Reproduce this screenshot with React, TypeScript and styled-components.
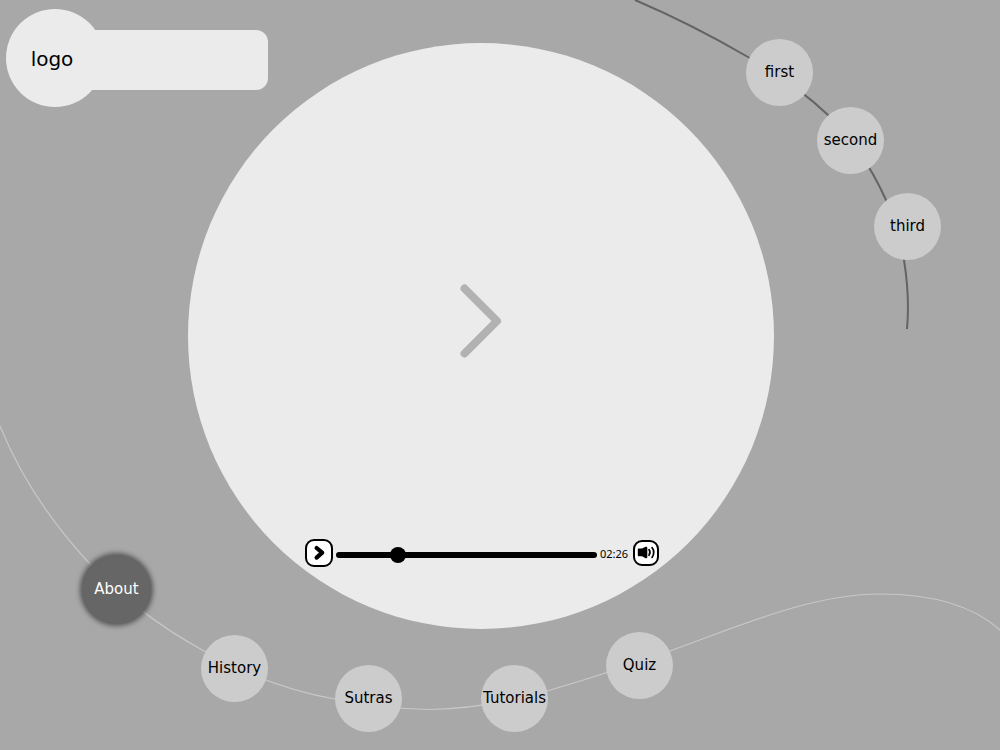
import React, { useState } from "react";
import styled, { createGlobalStyle, css } from "styled-components";

const GlobalStyle = createGlobalStyle`
  *, *::before, *::after { box-sizing: border-box; }
  body {
    margin: 0;
    background: #a8a8a8;
    color: #000;
    font-family: "DejaVu Sans", Verdana, sans-serif;
    font-size: 15px;
  }
`;

const Stage = styled.div`
  position: relative;
  display: grid;
  grid-template-columns: 188fr 586fr 226fr;
  align-items: start;
  width: 100%;
  aspect-ratio: 4 / 3;
  overflow: hidden;
`;

const Curves = styled.svg`
  position: absolute;
  inset: 0;
  width: 100%;
  height: 100%;
  fill: none;
`;

const Header = styled.header`
  position: relative;
  z-index: 1;
  grid-area: 1 / 1 / 2 / 3;
  justify-self: start;
  display: flex;
  align-items: flex-start;
  padding: 9px 0 0 6px;
`;

const LogoLink = styled.a`
  display: flex;
  align-items: center;
  justify-content: center;
  width: 98px;
  height: 98px;
  padding: 2px 6px 0 0;
  border-radius: 50%;
  background: #ebebeb;
  color: inherit;
  font-size: 20px;
  line-height: 24px;
  text-decoration: none;
`;

const LogoBar = styled.div`
  width: 184px;
  height: 60px;
  margin: 21px 0 0 -20px;
  border-radius: 0 12px 12px 0;
  background: #ebebeb;
`;

const Disc = styled.main`
  position: relative;
  grid-area: 1 / 2 / 2 / 3;
  display: flex;
  flex-direction: column;
  aspect-ratio: 1;
  margin-top: 43px;
  padding: 60px 115px 62px 117px;
  border-radius: 50%;
  background: #ebebeb;
`;

const BigPlay = styled.button`
  flex: 1;
  display: flex;
  align-items: center;
  justify-content: center;
  padding: 0 3px 0 0;
  border: 0;
  background: none;
  cursor: pointer;
`;

const Controls = styled.div`
  display: flex;
  align-items: center;
  gap: 3px;
`;

const IconButton = styled.button<{ $size: number }>`
  flex: none;
  display: flex;
  align-items: center;
  justify-content: center;
  width: ${(p) => p.$size}px;
  height: ${(p) => p.$size}px;
  padding: 0;
  border: 2px solid #000;
  border-radius: 9px;
  background: #fff;
  cursor: pointer;
`;

const Timeline = styled.div`
  flex: 1;
  display: flex;
  align-items: center;
  gap: 3px;
  min-width: 0;
  padding-top: 4px;
`;

const Seek = styled.input`
  flex: 1;
  min-width: 0;
  height: 16px;
  margin: 0;
  appearance: none;
  background: none;
  cursor: pointer;

  &::-webkit-slider-runnable-track {
    height: 6px;
    border-radius: 3px;
    background: #000;
  }
  &::-webkit-slider-thumb {
    appearance: none;
    width: 16px;
    height: 16px;
    margin-top: -5px;
    border-radius: 50%;
    background: #000;
  }
`;

const Time = styled.time`
  width: 30px;
  padding-bottom: 2px;
  font-family: "Noto Sans", sans-serif;
  font-size: 11px;
  line-height: 14px;
`;

const NodeLink = styled.a<{ $x: number; $y: number; $active?: boolean }>`
  position: absolute;
  left: ${(p) => p.$x / 10}%;
  top: ${(p) => p.$y / 7.5}%;
  display: flex;
  align-items: center;
  justify-content: center;
  width: 67px;
  height: 67px;
  margin: -33px 0 0 -33px;
  padding-bottom: 1px;
  border-radius: 50%;
  background: #ccc;
  color: #000;
  line-height: 18px;
  text-decoration: none;
  ${(p) =>
    p.$active &&
    css`
      background: #666;
      color: #fff;
      box-shadow: 0 0 0 1px #666, 0 0 5px 3px #555;
    `}
`;

type NodeItem = { label: string; x: number; y: number };

const steps: NodeItem[] = [
  { label: "first", x: 779, y: 72 },
  { label: "second", x: 850, y: 140 },
  { label: "third", x: 907, y: 226 },
];

const sections: NodeItem[] = [
  { label: "About", x: 116, y: 589 },
  { label: "History", x: 234, y: 668 },
  { label: "Sutras", x: 368, y: 698 },
  { label: "Tutorials", x: 514, y: 698 },
  { label: "Quiz", x: 639, y: 665 },
];

export default function App() {
  const [position, setPosition] = useState(22);
  const [active, setActive] = useState("About");

  return (
    <>
      <GlobalStyle />
      <Stage>
        <Curves viewBox="0 0 1000 750" preserveAspectRatio="none" aria-hidden="true">
          <path
            d="M635 0C675 17 712 36 748 57C778 74 805 93 828 115C852 138 871 167 886 200C894 219 900 239 904 260C908 285 909 307 907 329"
            stroke="#646464"
            strokeWidth="2"
          />
          <path
            d="M0 426C21 478 50 521 90 564C123 599 162 628 204 651C245 674 289 691 335 699C367 706 399 709 430 709.5C470 709 508 702 547 691C588 679 629 666 670 651C742 625 812 594 880 594C925 594 970 603 1000 630"
            stroke="#c8c8c8"
            strokeWidth="1.2"
          />
        </Curves>

        <Header>
          <LogoLink href="#home">logo</LogoLink>
          <LogoBar />
        </Header>

        <Disc>
          <BigPlay type="button" aria-label="Play video">
            <svg width="42" height="74" viewBox="0 0 42 74" fill="none" aria-hidden="true">
              <path d="M4.5 4.5L37 37L4.5 69.5" stroke="#b2b2b2" strokeWidth="8" strokeLinecap="round" strokeLinejoin="round" />
            </svg>
          </BigPlay>
          <Controls>
            <IconButton type="button" $size={28} aria-label="Play">
              <svg width="24" height="24" viewBox="0 0 24 24" fill="none" aria-hidden="true">
                <path d="M9.6 7L15.2 11.7L9.6 16.6" stroke="#000" strokeWidth="4.2" strokeLinecap="round" strokeLinejoin="round" />
              </svg>
            </IconButton>
            <Timeline>
              <Seek
                type="range"
                min={0}
                max={100}
                value={position}
                onChange={(e) => setPosition(Number(e.target.value))}
                aria-label="Seek"
              />
              <Time>02:26</Time>
            </Timeline>
            <IconButton type="button" $size={26} aria-label="Volume">
              <svg width="22" height="22" viewBox="0 0 22 22" fill="none" aria-hidden="true">
                <path d="M3.8 6.6H7L10.6 4.8Q12.3 4.2 12.3 6V15Q12.3 16.8 10.6 16.2L7 14.2H3.8Q2.8 14.2 2.8 13.2V7.6Q2.8 6.6 3.8 6.6Z" fill="#000" />
                <path d="M14 7.6Q16 10.4 14 13.4M17 5.6Q20.6 10.4 17 15.4" stroke="#000" strokeWidth="1.7" strokeLinecap="round" />
              </svg>
            </IconButton>
          </Controls>
        </Disc>

        <nav aria-label="Steps">
          {steps.map((item) => (
            <NodeLink key={item.label} href={`#${item.label}`} $x={item.x} $y={item.y}>
              {item.label}
            </NodeLink>
          ))}
        </nav>

        <nav aria-label="Sections">
          {sections.map((item) => (
            <NodeLink
              key={item.label}
              href={`#${item.label.toLowerCase()}`}
              $x={item.x}
              $y={item.y}
              $active={item.label === active}
              onClick={() => setActive(item.label)}
            >
              {item.label}
            </NodeLink>
          ))}
        </nav>
      </Stage>
    </>
  );
}
